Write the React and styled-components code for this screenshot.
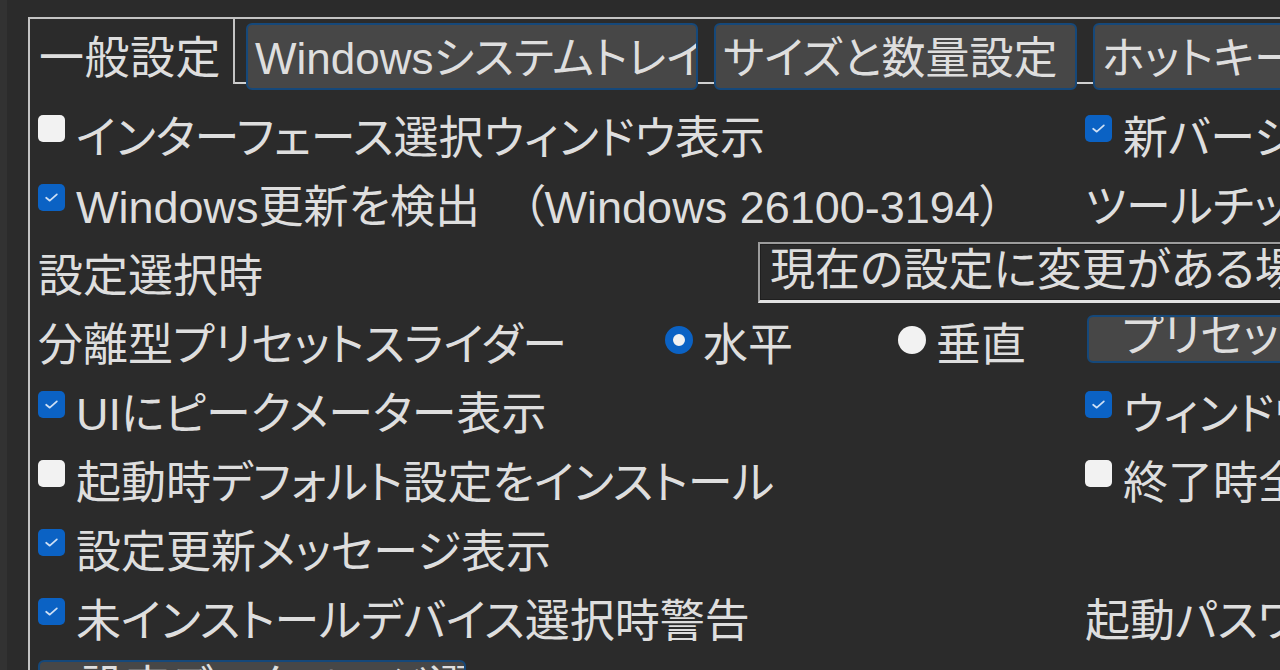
import React from "react";
import styled, { createGlobalStyle } from "styled-components";

const Global = createGlobalStyle`
  html, body {
    margin: 0;
    padding: 0;
    background: #2b2b2b;
    overflow: hidden;
  }
  body {
    font-family: "Liberation Sans", "Noto Sans CJK JP", sans-serif;
    font-feature-settings: "palt";
    color: #dedede;
  }
`;

const Page = styled.div`
  width: 1280px;
  height: 670px;
  overflow: hidden;
  box-sizing: border-box;
  padding: 17px 0 0 21px;
  border-left: 7px solid #323232;
`;

const Frame = styled.div`
  border-top: 2px solid #c4c4c4;
  border-left: 2px solid #c4c4c4;
  width: 1400px;
  height: 700px;
`;

const TabStrip = styled.div`
  display: flex;
  height: 71px;
  white-space: nowrap;
`;

const ActiveTab = styled.div`
  width: 205px;
  flex: none;
  border-right: 2px solid #c4c4c4;
  height: 65px;
  box-sizing: border-box;
  padding-left: 9px;
  font-size: 45px;
  line-height: 80px;
  letter-spacing: 0.5px;
`;

const TabGroup = styled.div`
  display: flex;
  flex: 1;
  padding-left: 11px;
  background: linear-gradient(#d0d0d0, #d0d0d0) no-repeat 0 63px / 100% 2px;
`;

const Tab = styled.div`
  flex: none;
  width: ${(p) => p.$w}px;
  margin: 4px ${(p) => p.$gap}px 0 0;
  height: 67px;
  box-sizing: border-box;
  background: #474747;
  border: 2px solid #15487a;
  border-radius: 6px;
  font-size: 44px;
  line-height: 68px;
  padding-left: 7px;
  overflow: hidden;
`;

const Content = styled.div`
  padding: 10px 0 0 8px;
`;

const Row = styled.div`
  display: flex;
  align-items: center;
  height: 69px;
  white-space: nowrap;
  font-size: 45px;
`;

const Cell = styled.div`
  display: flex;
  align-items: center;
  flex: none;
  height: 100%;
  width: ${(p) => (p.$w ? `${p.$w}px` : "auto")};
`;

const Box = styled.span`
  flex: none;
  align-self: flex-start;
  margin: 15px 11px 0 0;
  width: 27px;
  height: 27px;
  border-radius: 5px;
  box-sizing: border-box;
  display: flex;
  align-items: center;
  justify-content: center;
  background: ${(p) => (p.$on ? "#0b62c4" : "#f2f2f2")};
`;

const Radio = styled.span`
  flex: none;
  align-self: flex-start;
  margin: 19px 10px 0 0;
  width: 28px;
  height: 28px;
  border-radius: 50%;
  box-sizing: border-box;
  background: #f2f2f2;
  border: ${(p) => (p.$on ? "8px solid #0b62c4" : "none")};
`;

const Note = styled.span`
  margin-left: 42px;
`;

const Select = styled.div`
  flex: none;
  width: 700px;
  height: 61px;
  box-sizing: border-box;
  border: 2px solid #9c9c9c;
  border-bottom: 3px solid #e2e2e2;
  box-shadow: inset 0 0 0 1px #1f1f1f;
  padding-left: 10px;
  line-height: 54px;
  overflow: hidden;
`;

const Button = styled.div`
  flex: none;
  align-self: flex-start;
  width: ${(p) => p.$w}px;
  height: ${(p) => p.$h}px;
  margin-top: ${(p) => p.$top || 0}px;
  box-sizing: border-box;
  background: #474747;
  border: 2px solid #15487a;
  border-radius: 6px;
  padding-left: ${(p) => p.$pad}px;
  line-height: ${(p) => p.$h - 8}px;
  overflow: hidden;
`;

const Tick = () => (
  <svg width="15" height="11" viewBox="0 0 14 10">
    <path d="M2 5.2 L5.4 8 L12 2" fill="none" stroke="#cfe0f5" strokeWidth="1.6" strokeLinecap="round" strokeLinejoin="round" />
  </svg>
);

const Check = ({ on, children }) => (
  <>
    <Box $on={on}>{on && <Tick />}</Box>
    <span>{children}</span>
  </>
);

export default function App() {
  return (
    <Page>
      <Global />
      <Frame>
        <TabStrip>
          <ActiveTab>一般設定</ActiveTab>
          <TabGroup>
            <Tab $w={452} $gap={16}>Windowsシステムトレイ</Tab>
            <Tab $w={363} $gap={16}>サイズと数量設定</Tab>
            <Tab $w={300} $gap={0}>ホットキー設定</Tab>
          </TabGroup>
        </TabStrip>
        <Content>
          <Row>
            <Cell $w={1047}><Check>インターフェース選択ウィンドウ表示</Check></Cell>
            <Cell><Check on>新バージョン確認</Check></Cell>
          </Row>
          <Row>
            <Cell $w={1047}>
              <Check on>Windows更新を検出</Check>
              <Note>（Windows 26100-3194）</Note>
            </Cell>
            <Cell>ツールチップ表示</Cell>
          </Row>
          <Row>
            <Cell $w={720}>設定選択時</Cell>
            <Select>現在の設定に変更がある場合は確認</Select>
          </Row>
          <Row>
            <Cell $w={627}>分離型プリセットスライダー</Cell>
            <Cell $w={233}><Radio $on />水平</Cell>
            <Cell $w={189}><Radio />垂直</Cell>
            <Button $w={260} $h={48} $pad={33} $top={8}>プリセット管理</Button>
          </Row>
          <Row>
            <Cell $w={1047}><Check on>UIにピークメーター表示</Check></Cell>
            <Cell><Check on>ウィンドウ位置を記憶</Check></Cell>
          </Row>
          <Row>
            <Cell $w={1047}><Check>起動時デフォルト設定をインストール</Check></Cell>
            <Cell><Check>終了時全設定保存</Check></Cell>
          </Row>
          <Row>
            <Cell $w={1047}><Check on>設定更新メッセージ表示</Check></Cell>
          </Row>
          <Row>
            <Cell $w={1047}><Check on>未インストールデバイス選択時警告</Check></Cell>
            <Cell>起動パスワード</Cell>
          </Row>
          <Row>
            <Button $w={428} $h={60} $pad={40} $top={8}>設定データページ選択</Button>
          </Row>
        </Content>
      </Frame>
    </Page>
  );
}
